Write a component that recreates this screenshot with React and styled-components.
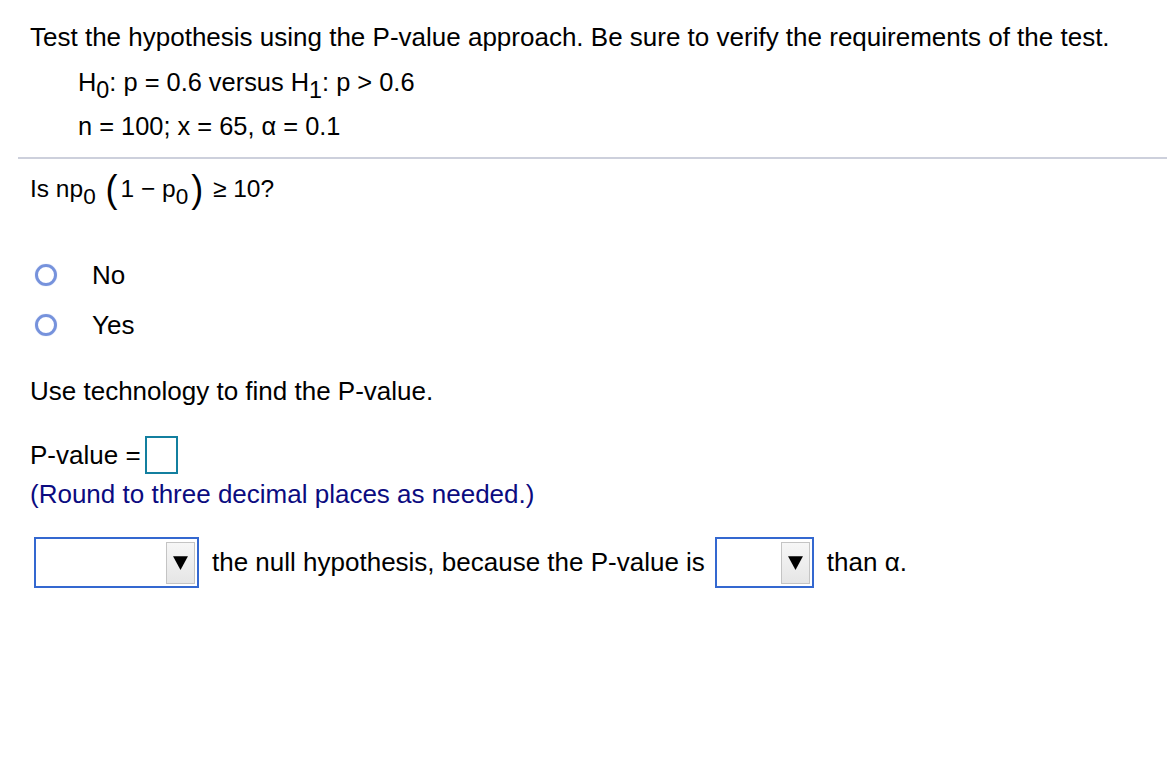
import styled, { createGlobalStyle } from "styled-components";

const GlobalStyle = createGlobalStyle`
  html, body {
    margin: 0;
    padding: 0;
    background: #ffffff;
  }
  body {
    font-family: "Liberation Sans", Arial, sans-serif;
    color: #000000;
  }
`;

const Page = styled.div`
  width: 1167px;
  height: 783px;
  padding: 18px 0 0 18px;
  box-sizing: border-box;
  overflow: hidden;
`;

const Block = styled.div`
  padding-left: 12px;
`;

const Prompt = styled.div`
  font-size: 26px;
  line-height: 38px;
`;

const Given = styled.div`
  padding-left: 48px;
  margin-top: 8px;
  display: flex;
  flex-direction: column;
  gap: 8px;
`;

const MathLine = styled.div`
  font-size: 25.4px;
  line-height: 36px;
  white-space: pre;
`;

const Sub = styled.sub`
  font-size: 0.92em;
  vertical-align: -0.32em;
  line-height: 0;
`;

const Divider = styled.hr`
  border: none;
  height: 2px;
  background: #cdd0dc;
  margin: 13px 0 0 0;
`;

const Question = styled.div`
  font-size: 24.5px;
  line-height: 40px;
  height: 40px;
  margin-top: 10px;
  white-space: pre;
`;

const Paren = styled.span`
  font-size: 36px;
  display: inline-block;
  vertical-align: -4px;
  transform: scaleY(1.1);
  font-weight: 300;
  margin: 0 3px;
`;

const Options = styled.div`
  margin-top: 48px;
  display: flex;
  flex-direction: column;
  gap: 14px;
`;

const Option = styled.label`
  display: flex;
  align-items: center;
  height: 36px;
  font-size: 26px;
`;

const Radio = styled.span`
  width: 22px;
  height: 22px;
  border-radius: 50%;
  border: 3px solid #7692dc;
  box-sizing: border-box;
  margin: 0 35px 0 5px;
  box-shadow: 0 0 1px #a9bbee;
`;

const Para = styled.div`
  font-size: 26px;
  line-height: 36px;
  margin-top: ${(p) => p.$top || 0}px;
`;

const AnswerRow = styled.div`
  display: flex;
  align-items: center;
  font-size: 26px;
  margin-top: 27px;
  white-space: pre;
`;

const AnswerBox = styled.span`
  width: 33px;
  height: 38px;
  border: 2px solid #137f9f;
  box-sizing: border-box;
  margin-left: 4px;
`;

const Hint = styled.div`
  font-size: 26px;
  line-height: 36px;
  margin-top: 2px;
  color: #0b0b80;
`;

const SelectRow = styled.div`
  display: flex;
  align-items: center;
  margin-top: 25px;
  margin-left: 4px;
  font-size: 26px;
  white-space: pre;
`;

const Dropdown = styled.span`
  width: ${(p) => p.$width}px;
  height: 51px;
  border: 2px solid #3468d0;
  box-sizing: border-box;
  display: flex;
  justify-content: flex-end;
  align-items: center;
  padding-right: 2px;
  margin: 0 13px 0 ${(p) => p.$left || 0}px;
`;

const ArrowButton = styled.span`
  width: 29px;
  height: 42px;
  background: linear-gradient(#f6f6f6, #e6e6e6);
  border: 1px solid #c4c4c4;
  box-sizing: border-box;
  display: flex;
  align-items: center;
  justify-content: center;
`;

const Arrow = () => (
  <svg width="17" height="17" viewBox="0 0 16 16">
    <path d="M1 2 H15 L8 15 Z" fill="#000" />
  </svg>
);

export default function App() {
  return (
    <>
      <GlobalStyle />
      <Page>
        <Block>
          <Prompt>
            Test the hypothesis using the P-value approach. Be sure to verify the requirements of the test.
          </Prompt>
          <Given>
            <MathLine>
              H<Sub>0</Sub>: p = 0.6 versus H<Sub>1</Sub>: p &gt; 0.6
            </MathLine>
            <MathLine>n = 100; x = 65, α = 0.1</MathLine>
          </Given>
        </Block>
        <Divider />
        <Block>
          <Question>
            Is np<Sub>0</Sub> <Paren>(</Paren>1 − p<Sub>0</Sub><Paren>)</Paren> ≥ 10?
          </Question>
          <Options>
            <Option>
              <Radio />
              No
            </Option>
            <Option>
              <Radio />
              Yes
            </Option>
          </Options>
          <Para $top={30}>Use technology to find the P-value.</Para>
          <AnswerRow>
            P-value =<AnswerBox />
          </AnswerRow>
          <Hint>(Round to three decimal places as needed.)</Hint>
          <SelectRow>
            <Dropdown $width={165}>
              <ArrowButton>
                <Arrow />
              </ArrowButton>
            </Dropdown>
            the null hypothesis, because the P-value is
            <Dropdown $width={99} $left={10}>
              <ArrowButton>
                <Arrow />
              </ArrowButton>
            </Dropdown>
            than α.
          </SelectRow>
        </Block>
      </Page>
    </>
  );
}
